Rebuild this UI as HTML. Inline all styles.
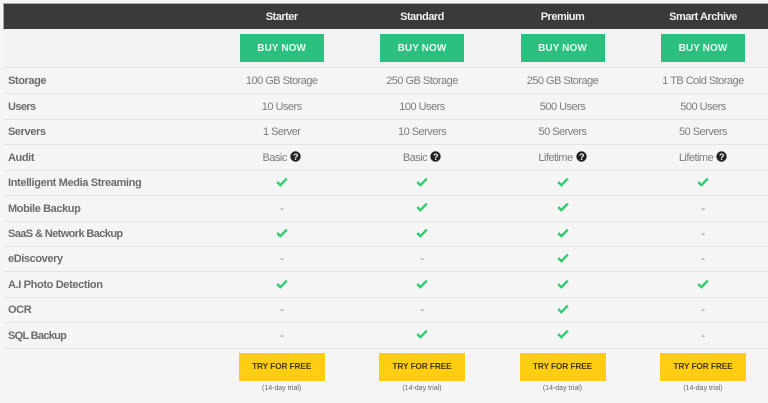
<!DOCTYPE html>
<html><head><meta charset="utf-8"><style>
html,body{margin:0;padding:0;width:768px;height:403px;overflow:hidden;background:#f5f5f5;font-family:"Liberation Sans",sans-serif}
#w{position:absolute;left:0;top:0;width:768px;height:403px;filter:blur(.3px)}
.a{position:absolute}
#hd{left:3px;top:3px;width:765px;height:25px;background:#3a3a3a;border-top:1px solid #a8a8a8;border-left:1px solid #a8a8a8;border-bottom:1px solid #a8a8a8;box-sizing:content-box}
#sub{left:4px;top:29px;width:764px;height:38px;background:#f2f2f2}
.h{top:10px;width:140px;text-align:center;color:#f2f2f2;font-size:11px;font-weight:bold;line-height:14px;letter-spacing:-.5px}
.r{position:absolute;left:4px;width:764px;height:25px;border-bottom:1px solid #e4e4e4;box-sizing:content-box}
.l{position:absolute;left:4px;top:6px;font-size:11px;font-weight:bold;color:#6b6b6b;line-height:14px;white-space:nowrap;letter-spacing:-.4px}
.c{position:absolute;top:6px;width:140px;text-align:center;font-size:11px;color:#7c7c7c;line-height:14px;white-space:nowrap;letter-spacing:-.52px}
.c1{left:207.7px}.c2{left:348px}.c3{left:488.5px}.c4{left:629px}
.b1{left:211.7px}.b2{left:352px}.b3{left:492.5px}.b4{left:633px}
.c svg{vertical-align:middle}
.ck{display:block;margin:.5px auto 0}
.q{margin:-2px 0 0 3px}
.buy{top:34px;width:84px;height:28px;margin-left:28px;background:#2bbf80;color:#eafaf3;font-size:10px;font-weight:bold;letter-spacing:.1px;line-height:30px;text-align:center}
.try{top:353px;width:86px;height:28px;margin-left:27px;background:#ffce13;color:#473a08;font-size:8.3px;font-weight:bold;letter-spacing:-.1px;line-height:27px;text-align:center}
.t{top:384px;width:140px;text-align:center;font-size:7px;color:#666;line-height:9px}
</style></head><body><div id="w">
<svg width="0" height="0" style="position:absolute"><defs>
<symbol id="k" viewBox="0 0 12 10"><path d="M1.2 5l3.2 3.2L10.8 1.6" fill="none" stroke="#2fcb70" stroke-width="2.4"/></symbol>
</defs></svg>
<div class="a" id="hd"></div>
<div class="a h b1">Starter</div><div class="a h b2">Standard</div><div class="a h b3">Premium</div><div class="a h b4">Smart Archive</div>
<div class="a" id="sub"></div>
<div class="r" style="top:29px;height:38px;background:#f2f2f2"></div>
<div class="a buy b1">BUY NOW</div><div class="a buy b2">BUY NOW</div><div class="a buy b3">BUY NOW</div><div class="a buy b4">BUY NOW</div>

<div class="r" style="top:68px"><span class="l">Storage</span><span class="c c1">100 GB Storage</span><span class="c c2">250 GB Storage</span><span class="c c3">250 GB Storage</span><span class="c c4">1 TB Cold Storage</span></div>
<div class="r" style="top:93.5px"><span class="l" style="letter-spacing:-.6px">Users</span><span class="c c1">10 Users</span><span class="c c2">100 Users</span><span class="c c3">500 Users</span><span class="c c4">500 Users</span></div>
<div class="r" style="top:119px"><span class="l">Servers</span><span class="c c1">1 Server</span><span class="c c2">10 Servers</span><span class="c c3">50 Servers</span><span class="c c4">50 Servers</span></div>
<div class="r" style="top:144.5px"><span class="l">Audit</span>
<span class="c c1">Basic<svg class="q" width="11" height="11" viewBox="0 0 11 11"><circle cx="5.5" cy="5.5" r="5.2" fill="#222"/><text x="5.5" y="9" font-size="9" font-weight="bold" text-anchor="middle" fill="#f5f5f5" font-family="Liberation Sans">?</text></svg></span>
<span class="c c2">Basic<svg class="q" width="11" height="11" viewBox="0 0 11 11"><circle cx="5.5" cy="5.5" r="5.2" fill="#222"/><text x="5.5" y="9" font-size="9" font-weight="bold" text-anchor="middle" fill="#f5f5f5" font-family="Liberation Sans">?</text></svg></span>
<span class="c c3">Lifetime<svg class="q" width="11" height="11" viewBox="0 0 11 11"><circle cx="5.5" cy="5.5" r="5.2" fill="#222"/><text x="5.5" y="9" font-size="9" font-weight="bold" text-anchor="middle" fill="#f5f5f5" font-family="Liberation Sans">?</text></svg></span>
<span class="c c4">Lifetime<svg class="q" width="11" height="11" viewBox="0 0 11 11"><circle cx="5.5" cy="5.5" r="5.2" fill="#222"/><text x="5.5" y="9" font-size="9" font-weight="bold" text-anchor="middle" fill="#f5f5f5" font-family="Liberation Sans">?</text></svg></span></div>
<div class="r" style="top:170px"><span class="l" style="letter-spacing:-.36px">Intelligent Media Streaming</span><span class="c c1"><svg class="ck" width="12" height="10"><use href="#k"/></svg></span><span class="c c2"><svg class="ck" width="12" height="10"><use href="#k"/></svg></span><span class="c c3"><svg class="ck" width="12" height="10"><use href="#k"/></svg></span><span class="c c4"><svg class="ck" width="12" height="10"><use href="#k"/></svg></span></div>
<div class="r" style="top:195.5px"><span class="l">Mobile Backup</span><span class="c c1">-</span><span class="c c2"><svg class="ck" width="12" height="10"><use href="#k"/></svg></span><span class="c c3"><svg class="ck" width="12" height="10"><use href="#k"/></svg></span><span class="c c4">-</span></div>
<div class="r" style="top:221px"><span class="l" style="letter-spacing:-.6px">SaaS &amp; Network Backup</span><span class="c c1"><svg class="ck" width="12" height="10"><use href="#k"/></svg></span><span class="c c2"><svg class="ck" width="12" height="10"><use href="#k"/></svg></span><span class="c c3"><svg class="ck" width="12" height="10"><use href="#k"/></svg></span><span class="c c4">-</span></div>
<div class="r" style="top:246px"><span class="l">eDiscovery</span><span class="c c1">-</span><span class="c c2">-</span><span class="c c3"><svg class="ck" width="12" height="10"><use href="#k"/></svg></span><span class="c c4">-</span></div>
<div class="r" style="top:272px"><span class="l" style="letter-spacing:-.36px">A.I Photo Detection</span><span class="c c1"><svg class="ck" width="12" height="10"><use href="#k"/></svg></span><span class="c c2"><svg class="ck" width="12" height="10"><use href="#k"/></svg></span><span class="c c3"><svg class="ck" width="12" height="10"><use href="#k"/></svg></span><span class="c c4"><svg class="ck" width="12" height="10"><use href="#k"/></svg></span></div>
<div class="r" style="top:297px"><span class="l">OCR</span><span class="c c1">-</span><span class="c c2">-</span><span class="c c3"><svg class="ck" width="12" height="10"><use href="#k"/></svg></span><span class="c c4">-</span></div>
<div class="r" style="top:322.5px"><span class="l" style="letter-spacing:-.7px">SQL Backup</span><span class="c c1">-</span><span class="c c2"><svg class="ck" width="12" height="10"><use href="#k"/></svg></span><span class="c c3"><svg class="ck" width="12" height="10"><use href="#k"/></svg></span><span class="c c4">-</span></div>

<div class="a try b1">TRY FOR FREE</div><div class="a try b2">TRY FOR FREE</div><div class="a try b3">TRY FOR FREE</div><div class="a try b4">TRY FOR FREE</div>
<div class="a t b1">(14-day trial)</div><div class="a t b2">(14-day trial)</div><div class="a t b3">(14-day trial)</div><div class="a t b4">(14-day trial)</div>
</div></body></html>
